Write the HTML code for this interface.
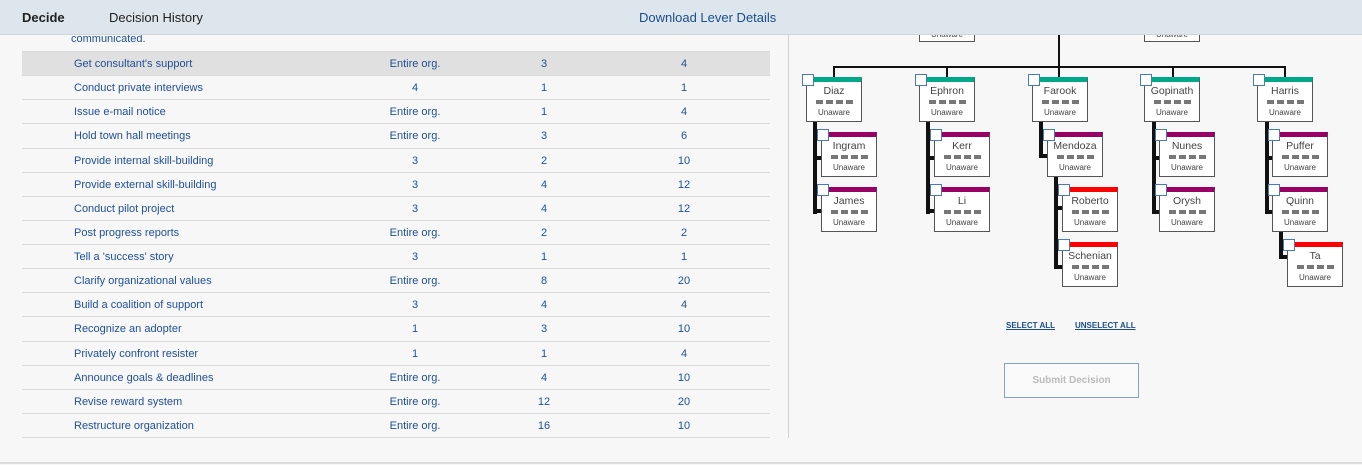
<!DOCTYPE html>
<html><head><meta charset="utf-8"><style>
*{margin:0;padding:0;box-sizing:border-box}
body{width:1362px;height:465px;overflow:hidden;background:#f7f7f7;font-family:"Liberation Sans",sans-serif;position:relative}
.hdr{position:absolute;left:0;top:0;width:1362px;height:35px;background:#dde6ed;border-bottom:1px solid #cdd6dd;z-index:5;font-size:13px;color:#222}
.hdr span{position:absolute;top:10px}
.row{position:absolute;left:22px;width:748px;height:24.13px;border-bottom:1px solid #d8d8d8;font-size:11px;color:#1f4f96;line-height:24px}
.row span{position:absolute;top:0}
.c1{left:52px}.c2{left:343px;width:100px;text-align:center}.c3{left:472px;width:100px;text-align:center}.c4{left:612px;width:100px;text-align:center}
.n{position:absolute;width:56px;height:45px;background:#fff;border:1px solid #555;border-top:5px solid #00a88a;text-align:center;color:#444}
.n.p{border-top-color:#990066}.n.r{border-top-color:#ff0000}
.n b{display:block;font-weight:normal;font-size:10.5px;margin-top:3px;line-height:12px}
.n s{display:block;width:37px;height:4px;margin:3px auto 4px;background:repeating-linear-gradient(90deg,#777 0 7px,transparent 7px 10px)}
.n em{display:block;font-style:normal;font-size:8px;line-height:10px}
.n i{position:absolute;left:-5px;top:-8px;width:12px;height:12px;background:#fff;border:1px solid #4a7ab5}
.k{position:absolute;background:#111}
.lk{position:absolute;top:321px;font-size:8px;font-weight:bold;color:#1a4e8c;text-decoration:underline}
</style></head><body>
<div class="hdr"><span style="left:22px;font-weight:bold">Decide</span><span style="left:109px">Decision History</span><span style="left:639px;color:#1a4e8c">Download Lever Details</span></div>
<div style="position:absolute;left:71px;top:33px;font-size:11px;color:#1f4f96">communicated.</div>
<div style="position:absolute;left:22px;top:51px;width:748px;height:1px;background:#d8d8d8"></div>
<div class="row" style="top:52px;background:#e0e0e0"><span class="c1">Get consultant's support</span><span class="c2">Entire org.</span><span class="c3">3</span><span class="c4">4</span></div>
<div class="row" style="top:76.13px"><span class="c1">Conduct private interviews</span><span class="c2">4</span><span class="c3">1</span><span class="c4">1</span></div>
<div class="row" style="top:100.26px"><span class="c1">Issue e-mail notice</span><span class="c2">Entire org.</span><span class="c3">1</span><span class="c4">4</span></div>
<div class="row" style="top:124.39px"><span class="c1">Hold town hall meetings</span><span class="c2">Entire org.</span><span class="c3">3</span><span class="c4">6</span></div>
<div class="row" style="top:148.52px"><span class="c1">Provide internal skill-building</span><span class="c2">3</span><span class="c3">2</span><span class="c4">10</span></div>
<div class="row" style="top:172.65px"><span class="c1">Provide external skill-building</span><span class="c2">3</span><span class="c3">4</span><span class="c4">12</span></div>
<div class="row" style="top:196.78px"><span class="c1">Conduct pilot project</span><span class="c2">3</span><span class="c3">4</span><span class="c4">12</span></div>
<div class="row" style="top:220.91px"><span class="c1">Post progress reports</span><span class="c2">Entire org.</span><span class="c3">2</span><span class="c4">2</span></div>
<div class="row" style="top:245.04px"><span class="c1">Tell a 'success' story</span><span class="c2">3</span><span class="c3">1</span><span class="c4">1</span></div>
<div class="row" style="top:269.17px"><span class="c1">Clarify organizational values</span><span class="c2">Entire org.</span><span class="c3">8</span><span class="c4">20</span></div>
<div class="row" style="top:293.3px"><span class="c1">Build a coalition of support</span><span class="c2">3</span><span class="c3">4</span><span class="c4">4</span></div>
<div class="row" style="top:317.43px"><span class="c1">Recognize an adopter</span><span class="c2">1</span><span class="c3">3</span><span class="c4">10</span></div>
<div class="row" style="top:341.56px"><span class="c1">Privately confront resister</span><span class="c2">1</span><span class="c3">1</span><span class="c4">4</span></div>
<div class="row" style="top:365.69px"><span class="c1">Announce goals &amp; deadlines</span><span class="c2">Entire org.</span><span class="c3">4</span><span class="c4">10</span></div>
<div class="row" style="top:389.82px"><span class="c1">Revise reward system</span><span class="c2">Entire org.</span><span class="c3">12</span><span class="c4">20</span></div>
<div class="row" style="top:413.95px"><span class="c1">Restructure organization</span><span class="c2">Entire org.</span><span class="c3">16</span><span class="c4">10</span></div>
<div style="position:absolute;left:788px;top:35px;width:1px;height:403px;background:#d0d0d0"></div>
<div style="position:absolute;left:0;top:462px;width:1362px;height:2px;background:#dcdcdc"></div>

<div class="n" style="left:919px;top:-3px;height:45px;border-top:1px solid #555"><em style="margin-top:32px">Unaware</em></div>
<div class="n" style="left:1144px;top:-3px;height:45px;border-top:1px solid #555"><em style="margin-top:32px">Unaware</em></div>
<div class="k" style="left:1058px;top:35px;width:2px;height:32px"></div>
<div class="k" style="left:833px;top:66px;width:452px;height:2px"></div>
<div class="k" style="left:833px;top:66px;width:2px;height:11px"></div>
<div class="k" style="left:946px;top:66px;width:2px;height:11px"></div>
<div class="k" style="left:1058px;top:66px;width:2px;height:11px"></div>
<div class="k" style="left:1172px;top:66px;width:2px;height:11px"></div>
<div class="k" style="left:1284px;top:66px;width:2px;height:11px"></div>

<div class="k" style="left:813px;top:121px;width:4px;height:93px"></div>
<div class="k" style="left:813px;top:156px;width:8px;height:4px"></div>
<div class="k" style="left:813px;top:209px;width:8px;height:4px"></div>
<div class="k" style="left:926px;top:121px;width:4px;height:93px"></div>
<div class="k" style="left:926px;top:156px;width:8px;height:4px"></div>
<div class="k" style="left:926px;top:209px;width:8px;height:4px"></div>
<div class="k" style="left:1039px;top:121px;width:4px;height:37px"></div>
<div class="k" style="left:1039px;top:154px;width:8px;height:4px"></div>
<div class="k" style="left:1054px;top:176px;width:4px;height:93px"></div>
<div class="k" style="left:1054px;top:206px;width:8px;height:4px"></div>
<div class="k" style="left:1054px;top:265px;width:8px;height:4px"></div>
<div class="k" style="left:1152px;top:121px;width:4px;height:93px"></div>
<div class="k" style="left:1152px;top:156px;width:8px;height:4px"></div>
<div class="k" style="left:1152px;top:210px;width:8px;height:4px"></div>
<div class="k" style="left:1265px;top:121px;width:4px;height:93px"></div>
<div class="k" style="left:1265px;top:156px;width:8px;height:4px"></div>
<div class="k" style="left:1265px;top:210px;width:8px;height:4px"></div>
<div class="k" style="left:1279px;top:231px;width:4px;height:28px"></div>
<div class="k" style="left:1279px;top:255px;width:8px;height:4px"></div>

<div class="n" style="left:806px;top:77px"><i></i><b>Diaz</b><s></s><em>Unaware</em></div>
<div class="n" style="left:919px;top:77px"><i></i><b>Ephron</b><s></s><em>Unaware</em></div>
<div class="n" style="left:1032px;top:77px"><i></i><b>Farook</b><s></s><em>Unaware</em></div>
<div class="n" style="left:1144px;top:77px"><i></i><b>Gopinath</b><s></s><em>Unaware</em></div>
<div class="n" style="left:1257px;top:77px"><i></i><b>Harris</b><s></s><em>Unaware</em></div>

<div class="n p" style="left:821px;top:132px"><i></i><b>Ingram</b><s></s><em>Unaware</em></div>
<div class="n p" style="left:821px;top:187px"><i></i><b>James</b><s></s><em>Unaware</em></div>
<div class="n p" style="left:934px;top:132px"><i></i><b>Kerr</b><s></s><em>Unaware</em></div>
<div class="n p" style="left:934px;top:187px"><i></i><b>Li</b><s></s><em>Unaware</em></div>
<div class="n p" style="left:1047px;top:132px"><i></i><b>Mendoza</b><s></s><em>Unaware</em></div>
<div class="n r" style="left:1062px;top:187px"><i></i><b>Roberto</b><s></s><em>Unaware</em></div>
<div class="n r" style="left:1062px;top:242px"><i></i><b>Schenian</b><s></s><em>Unaware</em></div>
<div class="n p" style="left:1159px;top:132px"><i></i><b>Nunes</b><s></s><em>Unaware</em></div>
<div class="n p" style="left:1159px;top:187px"><i></i><b>Orysh</b><s></s><em>Unaware</em></div>
<div class="n p" style="left:1272px;top:132px"><i></i><b>Puffer</b><s></s><em>Unaware</em></div>
<div class="n p" style="left:1272px;top:187px"><i></i><b>Quinn</b><s></s><em>Unaware</em></div>
<div class="n r" style="left:1287px;top:242px"><i></i><b>Ta</b><s></s><em>Unaware</em></div>

<div class="lk" style="left:1006px">SELECT ALL</div>
<div class="lk" style="left:1075px">UNSELECT ALL</div>
<div style="position:absolute;left:1004px;top:363px;width:135px;height:35px;border:1px solid #7fa3cc;background:#fafafa;color:#bbb;font-size:10px;font-weight:bold;text-align:center;line-height:33px">Submit Decision</div>
</body></html>
